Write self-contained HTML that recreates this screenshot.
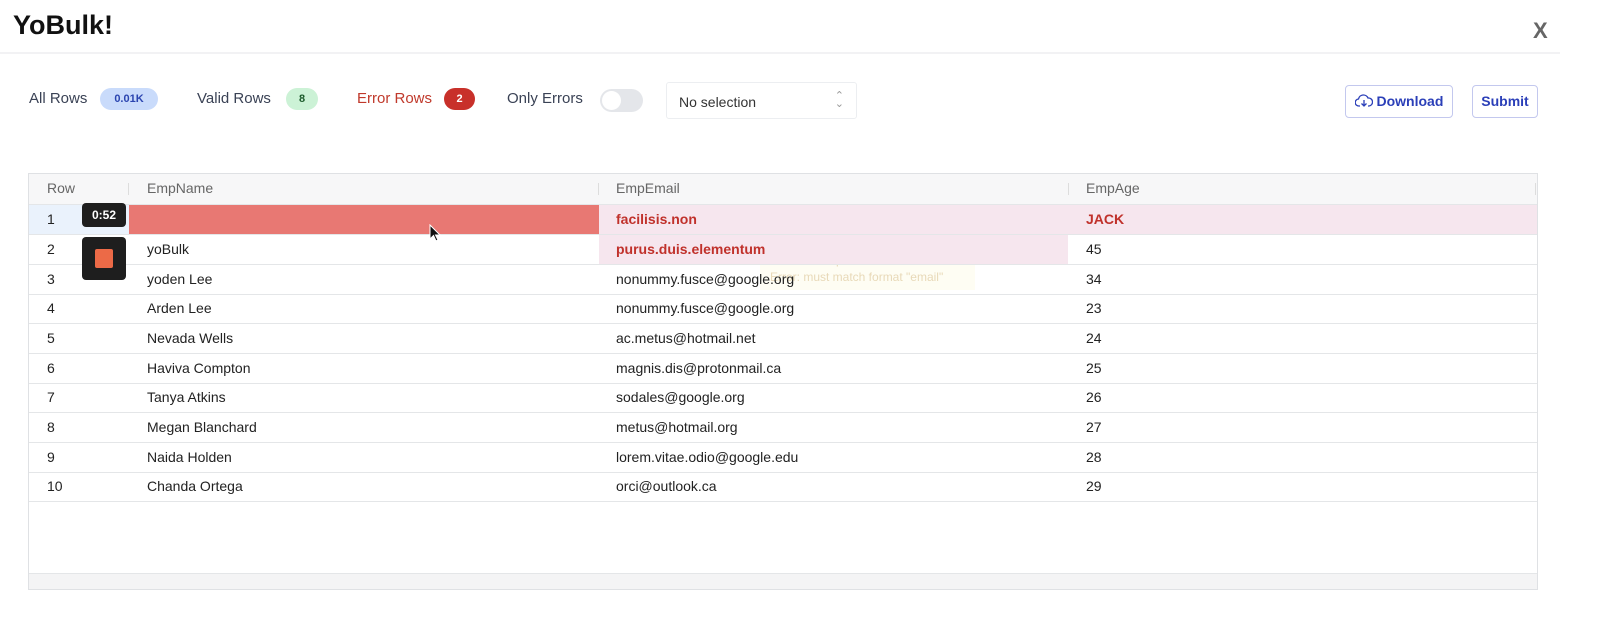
<!DOCTYPE html>
<html><head><style>
*{box-sizing:border-box;margin:0;padding:0}
body{width:1600px;height:644px;background:#fff;font-family:"Liberation Sans",sans-serif;position:relative;overflow:hidden;color:#222}
.a{position:absolute}
.title{left:13px;top:10px;font-size:27px;font-weight:bold;color:#111}
.x{left:1533px;top:18px;font-size:22px;font-weight:bold;color:#666}
.hr{left:0;top:52px;width:1560px;height:2px;background:#f2f2f4}
.lbl{font-size:15px;color:#3a4255;top:90px}
.pill{top:88px;height:22px;border-radius:11px;font-size:11px;font-weight:bold;text-align:center;line-height:22px}
.tog{left:600px;top:89px;width:43px;height:23px;border-radius:12px;background:#e4e6ea}
.tog::after{content:"";position:absolute;left:2px;top:2px;width:19px;height:19px;border-radius:50%;background:#fff}
.sel{left:666px;top:82px;width:191px;height:37px;border:1px solid #eceef1;border-radius:3px;font-size:14px;color:#333;padding:11px 12px}
.btn{top:85px;height:33px;border:1px solid #c3c8ee;border-radius:4px;color:#2b3fb8;font-size:14px;font-weight:bold;line-height:31px;text-align:center}
.tbl{left:28px;top:173px;width:1510px;height:417px;border:1px solid #dfe1e4}
.row{position:absolute;left:0;width:1508px;height:30px;border-bottom:1px solid #e4e6e8;font-size:14px;line-height:29px}
.row span{position:absolute}
.hd{background:#f7f7f8;color:#666;top:0;height:31px}
.sep{position:absolute;top:9px;width:1px;height:12px;background:#ddd}
</style></head><body>
<div class="a title">YoBulk!</div>
<div class="a x">X</div>
<div class="a hr"></div>
<div class="a lbl" style="left:29px">All Rows</div>
<div class="a pill" style="left:100px;width:58px;background:#c9dbfb;color:#2b45b0">0.01K</div>
<div class="a lbl" style="left:197px">Valid Rows</div>
<div class="a pill" style="left:286px;width:32px;background:#ccf2d6;color:#1d5c2c">8</div>
<div class="a lbl" style="left:357px;color:#c0392b">Error Rows</div>
<div class="a pill" style="left:444px;width:31px;background:#c8302a;color:#fff">2</div>
<div class="a lbl" style="left:507px">Only Errors</div>
<div class="a tog"></div>
<div class="a sel">No selection<span style="position:absolute;right:12px;top:9px;color:#999;font-size:11px;line-height:8px">&#8963;<br>&#8964;</span></div>
<div class="a btn" style="left:1345px;width:108px"><svg width="18" height="14" viewBox="0 0 18 14" style="vertical-align:-2px"><path d="M5 12H4a3.5 3.5 0 0 1-.5-7A5 5 0 0 1 13 4a3.5 3.5 0 0 1 1 8h-1M9 6v6M6.5 9.5 9 12l2.5-2.5" fill="none" stroke="#2b3fb8" stroke-width="1.3"/></svg> Download</div>
<div class="a btn" style="left:1472px;width:66px">Submit</div>
<div class="a" style="left:760px;top:250px;width:215px;height:40px;background:#fdfbe8;opacity:.5"></div>
<div class="a" style="left:760px;top:252px;font-size:12px;line-height:17px;color:#e8d9b8">&nbsp;&nbsp;&nbsp;Column: EmpEmail<br>&nbsp;&nbsp;&nbsp;Error: must match format "email"</div>
<div class="a tbl">
 <div class="row hd"><span style="left:18px;color:#666">Row</span><div class="sep" style="left:99px"></div><span style="left:118px">EmpName</span><div class="sep" style="left:569px"></div><span style="left:587px">EmpEmail</span><div class="sep" style="left:1039px"></div><span style="left:1057px">EmpAge</span><div class="sep" style="left:1506px"></div></div>
 <div class="row" style="top:31px;background:#f6e6ee"><span style="left:0;width:100px;height:29px;background:#eaf2fc"></span><span style="left:18px">1</span><span style="left:100px;width:470px;height:29px;background:#e87873"></span><span style="left:587px;color:#c0312b;font-weight:bold">facilisis.non</span><span style="left:1057px;color:#c0312b;font-weight:bold">JACK</span></div>
 <div class="row" style="top:61px"><span style="left:18px">2</span><span style="left:118px">yoBulk</span><span style="left:570px;width:469px;height:29px;background:#f6e6ee"></span><span style="left:587px;color:#c0312b;font-weight:bold">purus.duis.elementum</span><span style="left:1057px">45</span></div>
 <div class="row" style="top:91px"><span style="left:18px">3</span><span style="left:118px">yoden Lee</span><span style="left:587px">nonummy.fusce@google.org</span><span style="left:1057px">34</span></div>
 <div class="row" style="top:120px"><span style="left:18px">4</span><span style="left:118px">Arden Lee</span><span style="left:587px">nonummy.fusce@google.org</span><span style="left:1057px">23</span></div>
 <div class="row" style="top:150px"><span style="left:18px">5</span><span style="left:118px">Nevada Wells</span><span style="left:587px">ac.metus@hotmail.net</span><span style="left:1057px">24</span></div>
 <div class="row" style="top:180px"><span style="left:18px">6</span><span style="left:118px">Haviva Compton</span><span style="left:587px">magnis.dis@protonmail.ca</span><span style="left:1057px">25</span></div>
 <div class="row" style="top:209px"><span style="left:18px">7</span><span style="left:118px">Tanya Atkins</span><span style="left:587px">sodales@google.org</span><span style="left:1057px">26</span></div>
 <div class="row" style="top:239px"><span style="left:18px">8</span><span style="left:118px">Megan Blanchard</span><span style="left:587px">metus@hotmail.org</span><span style="left:1057px">27</span></div>
 <div class="row" style="top:269px"><span style="left:18px">9</span><span style="left:118px">Naida Holden</span><span style="left:587px">lorem.vitae.odio@google.edu</span><span style="left:1057px">28</span></div>
 <div class="row" style="top:298px"><span style="left:18px">10</span><span style="left:118px">Chanda Ortega</span><span style="left:587px">orci@outlook.ca</span><span style="left:1057px">29</span></div>
 <div style="position:absolute;left:0;top:399px;width:1508px;height:16px;background:#f4f4f5;border-top:1px solid #e4e6e8"></div>
</div>
<div class="a" style="left:82px;top:203px;width:44px;height:24px;background:#1e1e1e;border-radius:4px;color:#fff;font-size:12px;font-weight:bold;text-align:center;line-height:24px">0:52</div>
<div class="a" style="left:82px;top:237px;width:44px;height:43px;background:#1e1e1e;border-radius:4px"><div style="position:absolute;left:13px;top:12px;width:18px;height:19px;background:#ec6a47;border-radius:2px"></div></div>
<svg class="a" style="left:429px;top:224px" width="12" height="18" viewBox="0 0 12 18"><path d="M1 1v14l3.5-3.5 2.5 5.5 2-1-2.5-5H11z" fill="#111" stroke="#fff" stroke-width="1"/></svg>
</body></html>
